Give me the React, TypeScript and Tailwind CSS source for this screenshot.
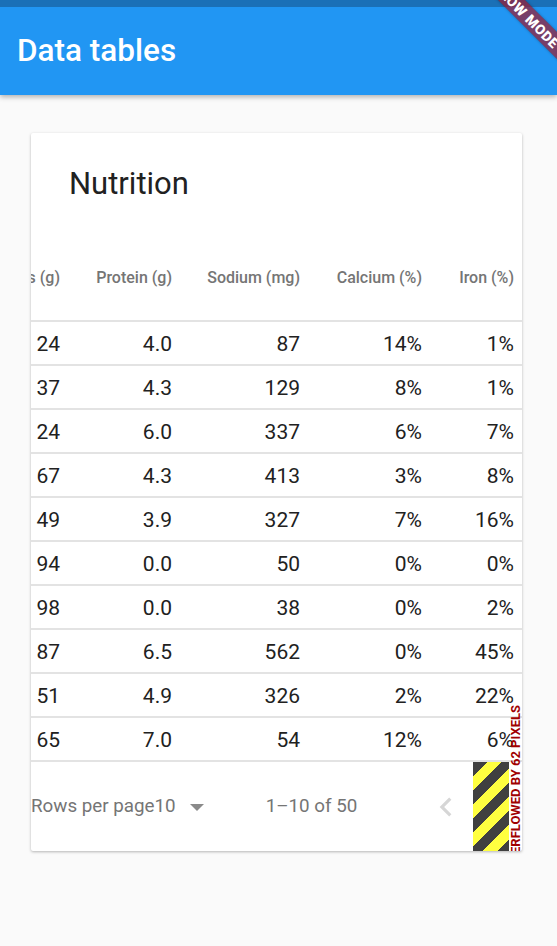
import React from "react";

/**
 * One row of the nutrition table (only the columns that are in view)
 */
interface Row {
  carbs: string;
  protein: string;
  sodium: string;
  calcium: string;
  iron: string;
}

const rows: Row[] = [
  { carbs: "24", protein: "4.0", sodium: "87", calcium: "14%", iron: "1%" },
  { carbs: "37", protein: "4.3", sodium: "129", calcium: "8%", iron: "1%" },
  { carbs: "24", protein: "6.0", sodium: "337", calcium: "6%", iron: "7%" },
  { carbs: "67", protein: "4.3", sodium: "413", calcium: "3%", iron: "8%" },
  { carbs: "49", protein: "3.9", sodium: "327", calcium: "7%", iron: "16%" },
  { carbs: "94", protein: "0.0", sodium: "50", calcium: "0%", iron: "0%" },
  { carbs: "98", protein: "0.0", sodium: "38", calcium: "0%", iron: "2%" },
  { carbs: "87", protein: "6.5", sodium: "562", calcium: "0%", iron: "45%" },
  { carbs: "51", protein: "4.9", sodium: "326", calcium: "2%", iron: "22%" },
  { carbs: "65", protein: "7.0", sodium: "54", calcium: "12%", iron: "6%" },
];

const headers = ["Carbs (g)", "Protein (g)", "Sodium (mg)", "Calcium (%)", "Iron (%)"];

// numeric cell, right aligned; overflows to the left when too wide
function Cell({ children }: { children: React.ReactNode }) {
  return <div className="flex min-w-0 justify-end whitespace-nowrap">{children}</div>;
}

export default function App() {
  return (
    <div className="relative h-[946px] w-[557px] overflow-hidden bg-[#fafafa] font-['Roboto',sans-serif]">
      {/* App bar */}
      <header className="relative z-10 bg-[#2196f3] shadow-[0_2px_5px_rgba(0,0,0,0.3)]">
        <div className="h-[7px] bg-[#1a70b7]" />
        <div className="flex h-[88px] items-center px-[17px]">
          <h1 className="text-[31.5px] font-medium leading-none text-white">Data tables</h1>
        </div>
      </header>

      {/* Card with paginated table */}
      <main className="pl-[31px] pt-[38px]">
        <div className="relative h-[718px] w-[491px] overflow-hidden rounded-[2px] bg-white shadow-[0_1px_3px_rgba(0,0,0,0.28)]">
          <div className="flex h-[101px] items-center pl-[38px] text-[31px] leading-none text-[#212121]">
            Nutrition
          </div>

          <div className="grid h-[88px] grid-cols-[29px_112px_128px_122px_92px] items-center border-b-2 border-[#e3e3e3] pt-[2px] text-[16px] font-medium leading-none text-[#757575]">
            {headers.map((h) => (
              <Cell key={h}>{h}</Cell>
            ))}
          </div>

          {rows.map((r, i) => (
            <div
              key={i}
              className="grid h-[44px] grid-cols-[29px_112px_128px_122px_92px] items-center border-b-2 border-[#e3e3e3] pt-[3px] text-[21px] leading-none text-[#212121]"
            >
              <Cell>{r.carbs}</Cell>
              <Cell>{r.protein}</Cell>
              <Cell>{r.sodium}</Cell>
              <Cell>{r.calcium}</Cell>
              <Cell>{r.iron}</Cell>
            </div>
          ))}

          {/* Footer (overflowing in the original) */}
          <div className="flex h-[89px] items-center text-[18.8px] leading-none text-[#757575]">
            <span className="whitespace-nowrap">Rows per page</span>
            <span>10</span>
            <svg className="ml-[14px] mt-[2px] h-[7px] w-[14px]" viewBox="0 0 14 7">
              <polygon points="0,0 14,0 7,7" fill="#8a8a8a" />
            </svg>
            <span className="ml-[62px] whitespace-nowrap">1–10 of 50</span>
            <svg className="ml-[70px] h-[38px] w-[38px]" viewBox="0 0 24 24">
              <path d="M15.41 7.41L14 6l-6 6 6 6 1.41-1.41L10.83 12z" fill="#d6d6d6" />
            </svg>
            <div className="ml-auto mr-[13px] w-[36px] self-stretch bg-[image:repeating-linear-gradient(135deg,#404040_0px,#404040_10px,#ffff40_10px,#ffff40_20px)]" />
          </div>

          {/* overflow warning label */}
          <div className="absolute left-[479px] top-[572px] rotate-180 whitespace-nowrap text-[13px] font-bold leading-[11px] text-[#a00000] [writing-mode:vertical-rl]">
            OVERFLOWED BY 62 PIXELS
          </div>
        </div>
      </main>

      {/* debug banner */}
      <div className="pointer-events-none absolute left-[427px] top-[6px] z-20 flex h-[19px] w-[200px] rotate-45 items-center justify-center bg-[rgba(160,20,40,0.68)] shadow-[0_0_3px_rgba(0,0,0,0.3)]">
        <span className="text-[14px] font-black leading-none tracking-[0.5px] text-white">SLOW MODE</span>
      </div>
    </div>
  );
}
